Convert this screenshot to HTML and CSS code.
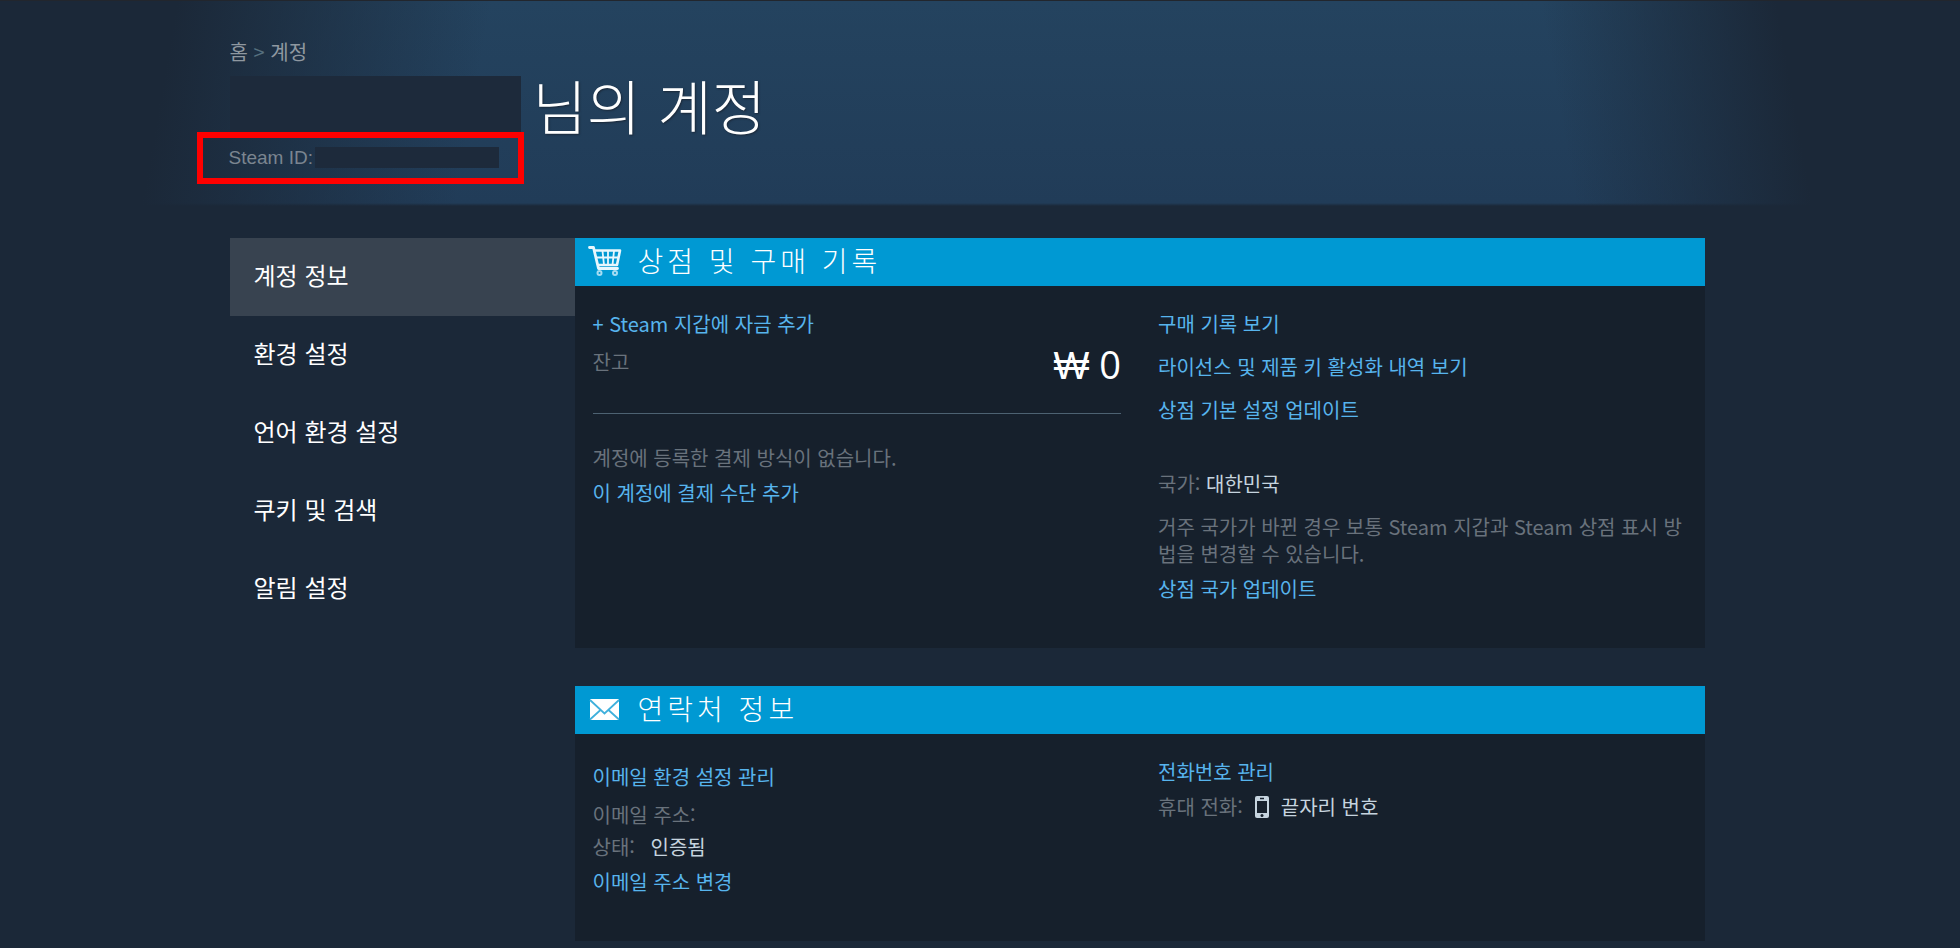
FILE: index.html
```html
<!DOCTYPE html>
<html lang="ko">

<head>
  <meta charset="UTF-8">
  <meta name="viewport" content="width=device-width, initial-scale=1.0">
  <title>계정</title>
  <link rel="stylesheet" href="styles.css">
</head>

<body>

  <header class="page-header">
    <div class="content">
      <nav class="breadcrumbs">
        <a href="#">홈</a> <span class="sep">&gt;</span> <a href="#">계정</a>
      </nav>
      <h1 class="title"><span class="hidden-name"></span>님의 계정</h1>
      <div class="steam-id">Steam ID:<span class="hidden-id"></span></div>
    </div>
  </header>

  <main class="content columns">

    <nav class="side-nav">
      <a class="active" href="#">계정 정보</a>
      <a href="#">환경 설정</a>
      <a href="#">언어 환경 설정</a>
      <a href="#">쿠키 및 검색</a>
      <a href="#">알림 설정</a>
    </nav>

    <div class="panels">

      <section class="panel">
        <h2>
          <svg class="icon" viewBox="0 0 34 32" fill="none" stroke="#e8f7fd">
            <path d="M1.500 2.500h4l5 21h19" stroke-width="2.800" stroke-linecap="round" stroke-linejoin="round"/>
            <path d="M6 5.500h26l-3 14.500h-19.500" stroke-width="2.600" stroke-linejoin="round"/>
            <path d="M7.500 12.500h23M14.500 6l1.500 14M20 6v14M26 6l-1.500 14" stroke-width="1.800"/>
            <circle cx="11.500" cy="28" r="2" stroke-width="2" stroke="#a5dcf2"/>
            <circle cx="27" cy="28" r="2" stroke-width="2" stroke="#a5dcf2"/>
          </svg>
          상점 및 구매 기록
        </h2>
        <div class="panel-body">
          <div class="col">
            <a href="#">+ Steam 지갑에 자금 추가</a>
            <div class="balance">
              <span>잔고</span>
              <span class="amount">₩ 0</span>
            </div>
            <p class="payment">계정에 등록한 결제 방식이 없습니다.</p>
            <a class="gap-s" href="#">이 계정에 결제 수단 추가</a>
          </div>
          <div class="col">
            <a href="#">구매 기록 보기</a>
            <a class="gap-m" href="#">라이선스 및 제품 키 활성화 내역 보기</a>
            <a class="gap-m" href="#">상점 기본 설정 업데이트</a>
            <p class="gap-l">국가: <span class="value">대한민국</span></p>
            <p class="gap-m">거주 국가가 바뀐 경우 보통 Steam 지갑과 Steam 상점 표시 방법을 변경할 수 있습니다.</p>
            <a class="gap-s" href="#">상점 국가 업데이트</a>
          </div>
        </div>
      </section>

      <section class="panel">
        <h2>
          <svg class="icon" viewBox="0 0 34 32">
            <rect x="2" y="6" width="29" height="21" rx="1" fill="#fff"/>
            <path d="M2 7l14.500 13.500L31 7M2 26.500l10.500-9.500M31 26.500L20.500 17" fill="none" stroke="#3fb0dc" stroke-width="1.800"/>
          </svg>
          연락처 정보
        </h2>
        <div class="panel-body">
          <div class="col email">
            <a href="#">이메일 환경 설정 관리</a>
            <p class="address">이메일 주소:</p>
            <p class="status">상태: <span class="value">인증됨</span></p>
            <a class="gap-s" href="#">이메일 주소 변경</a>
          </div>
          <div class="col">
            <a href="#">전화번호 관리</a>
            <p class="gap-s phone">휴대 전화:
              <svg viewBox="0 0 14 22">
                <rect x="0" y="0" width="14" height="22" rx="2" fill="#c6d4df"/>
                <rect x="2" y="5" width="10" height="12" fill="#16202c"/>
                <path d="M5 2.500h4" stroke="#16202c" stroke-width="1.500"/>
                <circle cx="7" cy="19.500" r="1.500" fill="#16202c"/>
              </svg>
              <span class="value">끝자리 번호</span>
            </p>
          </div>
        </div>
      </section>

    </div>
  </main>

</body>

</html>
```

FILE: styles.css
```css
* {
  box-sizing: border-box;
}

body {
  margin: 0;
  padding-right: 26px;
  border-top: 1px solid #22262d;
  background-color: #1b2838;
  color: #69727c;
  font-family: "Noto Sans CJK KR", sans-serif;
  font-size: 20px;
  line-height: 27px;
}

h1,
h2,
p {
  margin: 0;
  font-weight: normal;
}

a {
  color: #57b4ed;
  text-decoration: none;
}

a:hover {
  color: #fff;
}

.content {
  max-width: 1475px;
  margin: 0 auto;
}

.page-header {
  height: 205px;
  padding-top: 37px;
  background-image:
    linear-gradient(100deg, #1b2838 9%, rgba(27, 40, 56, 0) 25%),
    linear-gradient(260deg, #1b2838 8%, rgba(27, 40, 56, 0) 20%),
    linear-gradient(#24435f, #213c58 202px, #1b2838);
}

.breadcrumbs a {
  color: #8f98a0;
}

.breadcrumbs .sep {
  color: #56707f;
}

.title {
  display: flex;
  gap: 12px;
  height: 56px;
  margin-top: 11px;
  color: #fff;
  font-size: 59px;
  font-weight: 300;
  line-height: 57px;
  text-shadow: 1px 1px 2px #1b2838;
}

.hidden-name {
  width: 291px;
  background-color: #1d2a3b;
}

.steam-id {
  display: flex;
  align-items: center;
  gap: 2px;
  width: 327px;
  height: 52px;
  margin-left: -33px;
  padding: 0 0 2px 26px;
  border: 6px solid #f00;
  color: #7b8590;
  font-family: "Liberation Sans", Arial, sans-serif;
  font-size: 19px;
}

.hidden-id {
  width: 184px;
  height: 21px;
  background-color: #1d2a3b;
}

.columns {
  display: flex;
  padding-top: 32px;
}

.side-nav {
  flex: 0 0 345px;
}

.side-nav a {
  display: block;
  padding: 0 24px 4px;
  color: #fff;
  font-size: 24px;
  line-height: 74px;
}

.side-nav .active {
  background-color: #384350;
}

.panels {
  flex: 1;
}

.panel {
  margin-bottom: 38px;
  background-color: #16202c;
}

.panel:last-child {
  margin-bottom: 5px;
}

.panel h2 {
  display: flex;
  align-items: center;
  gap: 16px;
  height: 48px;
  padding: 0 0 3px 13px;
  background-color: #0099d3;
  color: #fff;
  font-size: 28px;
  font-weight: 300;
  letter-spacing: 4px;
}

.icon {
  width: 34px;
  height: 32px;
}

.panel-body {
  display: grid;
  grid-template-columns: 1fr 1fr;
  gap: 37px;
  padding: 24px 18px 46px;
}

.col a {
  display: block;
}

.value {
  color: #c6d4df;
}

.balance {
  display: flex;
  justify-content: space-between;
  height: 77px;
  padding-top: 11px;
  border-bottom: 1px solid #4d6272;
}

.amount {
  color: #fff;
  font-family: "Open Sans", sans-serif;
  font-size: 38px;
  line-height: 32px;
}

.payment {
  margin-top: 30px;
}

.gap-s {
  margin-top: 8px;
}

.gap-m {
  margin-top: 16px;
}

.gap-l {
  margin-top: 47px;
}

.email {
  padding-top: 5px;
}

.address {
  margin-top: 11px;
}

.status {
  margin-top: 5px;
}

.status .value {
  margin-left: 10px;
}

.phone {
  display: flex;
  align-items: center;
  gap: 12px;
}

.phone svg {
  width: 14px;
  height: 22px;
}
```
